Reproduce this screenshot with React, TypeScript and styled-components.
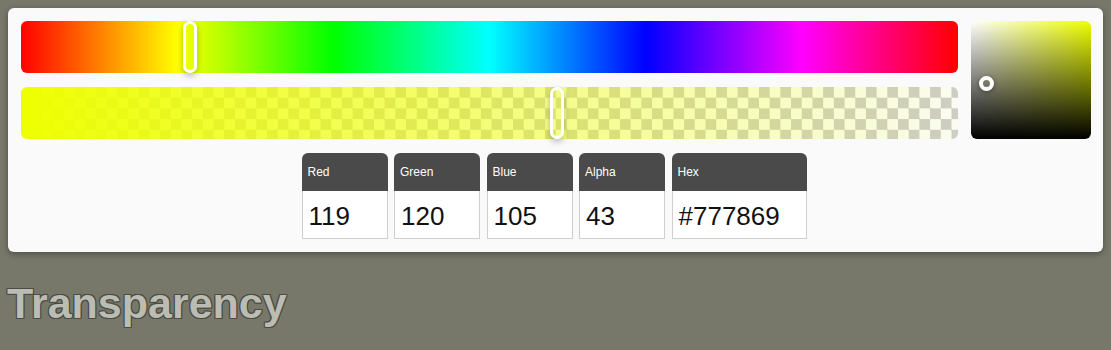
import React from 'react';
import styled, { createGlobalStyle } from 'styled-components';

const GlobalStyle = createGlobalStyle`
  html, body {
    margin: 0;
    padding: 0;
    background-color: #777869;
    font-family: 'Liberation Sans', Arial, sans-serif;
  }
`;

const Page = styled.div`
  padding: 8px;
  height: 350px;
  box-sizing: border-box;
`;

const Panel = styled.div`
  display: flex;
  flex-direction: column;
  align-items: center;
  gap: 14px;
  padding: 13px 12px 13px 13px;
  background-color: #fafafa;
  border-radius: 6px;
  box-shadow: 0 2px 6px rgba(0, 0, 0, 0.35);
`;

const TopRow = styled.div`
  display: flex;
  gap: 13px;
  width: 100%;
`;

const Bars = styled.div`
  display: flex;
  flex-direction: column;
  gap: 14px;
  flex: 1;
`;

const Track = styled.div`
  position: relative;
  height: 52px;
  border-radius: 6px;
`;

const HueTrack = styled(Track)`
  background: linear-gradient(
    to right,
    #ff0000 0%,
    #ffff00 16.66%,
    #00ff00 33.33%,
    #00ffff 50%,
    #0000ff 66.66%,
    #ff00ff 83.33%,
    #ff0000 100%
  );
`;

const AlphaTrack = styled(Track)`
  background-color: #fafcf0;
  background-image:
    linear-gradient(to right, rgba(238, 255, 0, 1), rgba(238, 255, 0, 0)),
    linear-gradient(45deg, #cdcdc3 25%, transparent 25%, transparent 75%, #cdcdc3 75%),
    linear-gradient(45deg, #cdcdc3 25%, transparent 25%, transparent 75%, #cdcdc3 75%);
  background-size: 100% 100%, 21.4px 21.4px, 21.4px 21.4px;
  background-position: 0 0, 0 0, 10.7px 10.7px;
`;

const Thumb = styled.div<{ $pos: number }>`
  position: absolute;
  top: 0;
  left: ${(p) => p.$pos}px;
  width: 14px;
  height: 52px;
  box-sizing: border-box;
  border: 3px solid #fff;
  border-radius: 7px;
  box-shadow: 0 3px 6px rgba(0, 0, 0, 0.25);
`;

const SatSquare = styled.div`
  position: relative;
  width: 120px;
  height: 118px;
  border-radius: 6px;
  background:
    linear-gradient(to top, #000, rgba(0, 0, 0, 0)),
    linear-gradient(to right, #fff, rgba(255, 255, 255, 0)),
    #eeff00;
`;

const SatHandle = styled.div`
  position: absolute;
  left: 8px;
  top: 55px;
  width: 15px;
  height: 15px;
  box-sizing: border-box;
  border: 4px solid #fff;
  border-radius: 50%;
  box-shadow: 0 1px 4px rgba(0, 0, 0, 0.4);
`;

const Fields = styled.div`
  display: flex;
  gap: 6.5px;
  margin-right: 4px;
`;

const Field = styled.div<{ $wide?: boolean }>`
  display: flex;
  flex-direction: column;
  width: ${(p) => (p.$wide ? 135 : 86)}px;
`;

const FieldLabel = styled.div`
  height: 38px;
  box-sizing: border-box;
  padding: 12px 6px 0;
  background-color: #4a4a4a;
  border-radius: 6px 6px 0 0;
  color: #fff;
  font-size: 12px;
`;

const FieldValue = styled.div`
  height: 48px;
  box-sizing: border-box;
  padding: 10px 6px 0;
  background-color: #fff;
  border: 1px solid #cfcfcf;
  border-top: none;
  color: #111;
  font-size: 26px;
  line-height: 30px;
`;

const Title = styled.h1`
  margin: 30px 0 0 -1px;
  font-family: 'Liberation Sans', Arial, Helvetica, sans-serif;
  font-weight: bold;
  font-size: 43px;
  line-height: 1;
  color: #bbbcb3;
  text-shadow:
    1px 0 0 #4b4c42,
    -1px 0 0 #4b4c42,
    0 1px 0 #4b4c42,
    0 -1px 0 #4b4c42,
    1px 1px 0 #4b4c42,
    -1px -1px 0 #4b4c42,
    1px -1px 0 #4b4c42,
    -1px 1px 0 #4b4c42;
`;

const fields = [
  { label: 'Red', value: '119' },
  { label: 'Green', value: '120' },
  { label: 'Blue', value: '105' },
  { label: 'Alpha', value: '43' },
  { label: 'Hex', value: '#777869', wide: true },
];

const App: React.FC = () => {
  return (
    <>
      <GlobalStyle />
      <Page>
        <Panel>
          <TopRow>
            <Bars>
              <HueTrack>
                <Thumb $pos={162} />
              </HueTrack>
              <AlphaTrack>
                <Thumb $pos={529} />
              </AlphaTrack>
            </Bars>
            <SatSquare>
              <SatHandle />
            </SatSquare>
          </TopRow>
          <Fields>
            {fields.map((f) => (
              <Field key={f.label} $wide={f.wide}>
                <FieldLabel>{f.label}</FieldLabel>
                <FieldValue>{f.value}</FieldValue>
              </Field>
            ))}
          </Fields>
        </Panel>
        <Title>Transparency</Title>
      </Page>
    </>
  );
};

export default App;
